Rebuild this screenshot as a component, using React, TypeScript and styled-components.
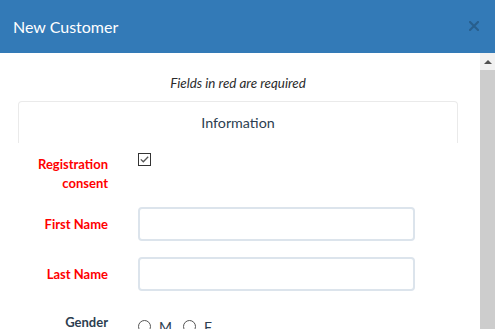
import React from "react";
import styled, { createGlobalStyle } from "styled-components";

const Global = createGlobalStyle`
  html, body { margin: 0; padding: 0; overflow: hidden; background: #fff; }
  body { font-family: Lato, "Open Sans", sans-serif; color: #2c3e50; }
  * { box-sizing: border-box; }
`;

const Modal = styled.div`
  width: 495px;
  display: flex;
  flex-direction: column;
`;

const Header = styled.div`
  height: 53px;
  background: #337ab7;
  display: flex;
  align-items: center;
  justify-content: space-between;
  padding: 0 15px 0 13px;
`;

const Title = styled.h4`
  margin: 0;
  font-size: 16px;
  font-weight: 400;
  color: #fff;
  line-height: 1;
`;

const Close = styled.button`
  border: 0;
  background: transparent;
  padding: 0;
  width: 12px;
  height: 12px;
  display: flex;
  align-items: center;
  justify-content: center;
  margin-top: -1px;
`;

const Body = styled.div`
  height: 600px;
  display: flex;
  overflow: hidden;
`;

const Content = styled.div`
  flex: 1;
  padding: 22px 22px 40px 18px;
`;

const ScrollBar = styled.div`
  width: 15px;
  display: flex;
  flex-direction: column;
  background: #f1f1f1;
`;

const ScrollButton = styled.div`
  height: 17px;
  display: flex;
  align-items: center;
  justify-content: center;
  background: #f1f1f1;
`;

const Thumb = styled.div`
  flex: 1;
  background: #cdcdcd;
`;

const Note = styled.p`
  margin: 0 0 10px;
  text-align: center;
  font-style: italic;
  font-size: 13.4px;
  line-height: 16px;
  color: #2b2b2b;
`;

const Panel = styled.div`
  border: 1px solid #eaeaea;
  border-bottom: 0;
  border-radius: 4px 4px 0 0;
  height: 42px;
  display: flex;
  align-items: center;
  justify-content: center;
  font-size: 14.3px;
  color: #2c3e50;
  margin-bottom: 10px;
`;

const Row = styled.div<{ $mb: number; $align?: string }>`
  display: grid;
  grid-template-columns: 90px 277px;
  column-gap: 30px;
  align-items: ${(p) => p.$align ?? "center"};
  margin-bottom: ${(p) => p.$mb}px;
`;

const Label = styled.label<{ $required?: boolean; $pt?: number }>`
  text-align: right;
  font-size: 13px;
  font-weight: 700;
  line-height: 19px;
  color: ${(p) => (p.$required ? "#ff0000" : "#2c3e50")};
  padding-top: ${(p) => p.$pt ?? 0}px;
`;

const Input = styled.input`
  width: 277px;
  height: 34px;
  border: 2px solid #dce4ec;
  border-radius: 4px;
  padding: 6px 10px;
  font: inherit;
  font-size: 13px;
  outline: none;
  background: #fff;
`;

const Check = styled.span`
  width: 13px;
  height: 13px;
  border: 1px solid #333;
  display: flex;
  align-items: center;
  justify-content: center;
`;

const Radios = styled.div`
  display: flex;
  align-items: center;
  gap: 11px;
  padding-top: 11px;
  font-size: 14px;
  color: #2c3e50;
`;

const RadioOpt = styled.label`
  display: flex;
  align-items: center;
  gap: 8px;
`;

const RadioCircle = styled.span`
  width: 13px;
  height: 13px;
  border: 1px solid #555;
  border-radius: 50%;
`;

export default function App() {
  return (
    <>
      <Global />
      <Modal>
        <Header>
          <Title>New Customer</Title>
          <Close aria-label="Close">
            <svg width="10" height="10" viewBox="0 0 10 10">
              <path d="M1 1L9 9M9 1L1 9" stroke="rgba(0,0,0,0.22)" strokeWidth="2.2" strokeLinecap="square" />
            </svg>
          </Close>
        </Header>
        <Body>
          <Content>
            <Note>Fields in red are required</Note>
            <Panel>Information</Panel>
            <Row $mb={14} $align="start">
              <Label $required $pt={2}>Registration consent</Label>
              <Check>
                <svg width="9" height="7" viewBox="0 0 9 7">
                  <path d="M0.8 3.4L3.3 5.8L8.2 0.8" fill="none" stroke="#555" strokeWidth="1.3" />
                </svg>
              </Check>
            </Row>
            <Row $mb={16}>
              <Label $required>First Name</Label>
              <Input />
            </Row>
            <Row $mb={16}>
              <Label $required>Last Name</Label>
              <Input />
            </Row>
            <Row $mb={16} $align="start">
              <Label $pt={6}>Gender</Label>
              <Radios>
                <RadioOpt><RadioCircle />M</RadioOpt>
                <RadioOpt><RadioCircle />F</RadioOpt>
              </Radios>
            </Row>
          </Content>
          <ScrollBar>
            <ScrollButton>
              <svg width="8" height="5" viewBox="0 0 8 5">
                <path d="M0 5L4 1L8 5Z" fill="#505050" />
              </svg>
            </ScrollButton>
            <Thumb />
          </ScrollBar>
        </Body>
      </Modal>
    </>
  );
}
